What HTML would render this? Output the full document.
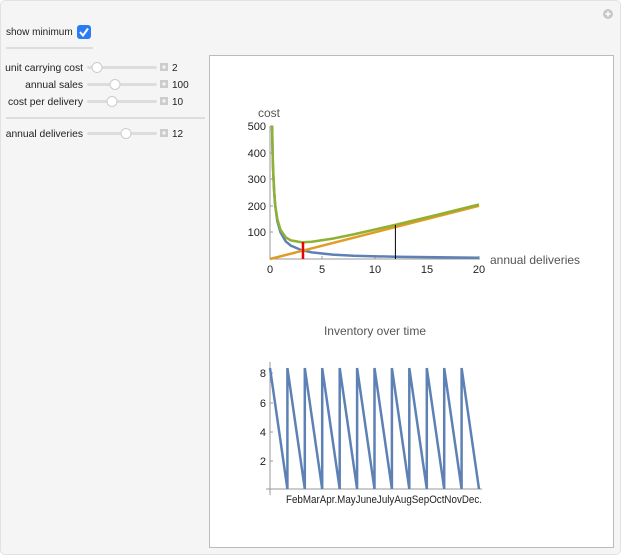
<!DOCTYPE html><html><head><style>
body{margin:0;width:621px;height:555px;background:#fff;font-family:"Liberation Sans",sans-serif;}
.o{position:absolute;left:0;top:0;width:619px;height:553px;background:#f5f5f5;border:1px solid #e2e2e2;border-radius:5px;}
</style></head><body><div class="o"></div>
<svg width="621" height="555" style="position:absolute;left:0;top:0" font-family="Liberation Sans, sans-serif">
<circle cx="608" cy="14" r="5" fill="#c8c8c8"/><path d="M605.5 14h5M608 11.5v5" stroke="#fff" stroke-width="1.5"/>
<text x="6" y="35" font-size="10" fill="#222">show minimum</text>
<rect x="77" y="25" width="14" height="14" rx="3" fill="#2a7cf6"/><path d="M80 32l3 3.5 5-7" stroke="#fff" stroke-width="2" fill="none"/>
<rect x="6" y="47" width="87" height="2" fill="#ddd"/>
<rect x="6" y="117" width="199" height="2" fill="#ddd"/>
<g font-size="10.3" fill="#222" text-anchor="end">
<text x="83" y="71">unit carrying cost</text><text x="83" y="88">annual sales</text><text x="83" y="105">cost per delivery</text><text x="83" y="137">annual deliveries</text></g>
<g fill="#ddd"><rect x="87" y="66" width="70" height="3" rx="1.5"/><rect x="87" y="83" width="70" height="3" rx="1.5"/><rect x="87" y="100" width="70" height="3" rx="1.5"/><rect x="87" y="132" width="70" height="3" rx="1.5"/></g>
<g fill="#fff" stroke="#ccc"><circle cx="97" cy="67.5" r="5"/><circle cx="115" cy="84.5" r="5"/><circle cx="112" cy="101.5" r="5"/><circle cx="126" cy="133.5" r="5"/></g>
<g fill="#ccc"><rect x="160" y="63" width="8" height="8"/><rect x="160" y="80" width="8" height="8"/><rect x="160" y="97" width="8" height="8"/><rect x="160" y="129" width="8" height="8"/></g>
<g stroke="#fff"><path d="M162 67h4M164 65v4M162 84h4M164 82v4M162 101h4M164 99v4M162 133h4M164 131v4"/></g>
<g font-size="10" fill="#222"><text x="172" y="71">2</text><text x="172" y="88">100</text><text x="172" y="105">10</text><text x="172" y="137">12</text></g>
<rect x="209.5" y="55.5" width="404" height="492" fill="#fff" stroke="#bbb"/>
<g stroke="#999" fill="none"><path d="M270 126V259H480"/><path d="M270 232h3M270 206h3M270 179h3M270 153h3M270 126h3M322 259v-3M375 259v-3M427 259v-3M479 259v-3"/></g>
<g font-size="11" fill="#222" text-anchor="end"><text x="266" y="130">500</text><text x="266" y="157">400</text><text x="266" y="183">300</text><text x="266" y="210">200</text><text x="266" y="236">100</text></g>
<g font-size="11" fill="#222" text-anchor="middle"><text x="270" y="273">0</text><text x="322" y="273">5</text><text x="375" y="273">10</text><text x="427" y="273">15</text><text x="479" y="273">20</text></g>
<text x="258" y="117" font-size="12" fill="#555">cost</text>
<text x="490" y="264" font-size="12" fill="#555">annual deliveries</text>
<g fill="none" stroke-width="2.5">
<polyline stroke="#5e81b5" points="272.1,126 272.6,152.6 273.1,170.4 274.2,192.5 275.2,205.8 277.3,221 280.5,232.4 285.7,241.3 290.9,245.7 301.4,250.1 311.8,252.4 332.7,254.6 353.6,255.7 395.4,256.8 437.2,257.3 479,257.7"/>
<polyline stroke="#e19c24" points="270,259 479,205.8"/>
<polyline stroke="#8fb032" points="272.1,125.5 272.6,151.9 273.1,169.6 274.2,191.4 275.2,204.5 277.3,219.1 280.5,229.7 285.7,237.3 290.9,240.4 301.4,242.2 303,242.2 311.8,241.7 332.7,238.6 353.6,234.4 395.4,224.9 437.2,214.8 479,204.5"/>
<path d="M303 259V242" stroke="#e00" stroke-width="2.5"/>
</g>
<path d="M395.4 259V224.9" stroke="#000" stroke-width="1"/>
<text x="375" y="335" font-size="12" fill="#555" text-anchor="middle">Inventory over time</text>
<g stroke="#999" fill="none"><path d="M270 362V495M266 489H482"/><path d="M270 373h3M270 403h3M270 432h3M270 461h3"/></g>
<g font-size="11" fill="#222" text-anchor="end"><text x="266" y="377">8</text><text x="266" y="407">6</text><text x="266" y="436">4</text><text x="266" y="465">2</text></g>
<polyline fill="none" stroke="#5e81b5" stroke-width="2.5" points="270,368 287.4,489 287.4,368 304.8,489 304.8,368 322.2,489 322.2,368 339.7,489 339.7,368 357.1,489 357.1,368 374.5,489 374.5,368 391.9,489 391.9,368 409.3,489 409.3,368 426.8,489 426.8,368 444.2,489 444.2,368 461.6,489 461.6,368 479,489"/>
<text x="286" y="503" font-size="11" fill="#222" textLength="196" lengthAdjust="spacingAndGlyphs">FebMarApr.MayJuneJulyAugSepOctNovDec.</text>
</svg></body></html>
